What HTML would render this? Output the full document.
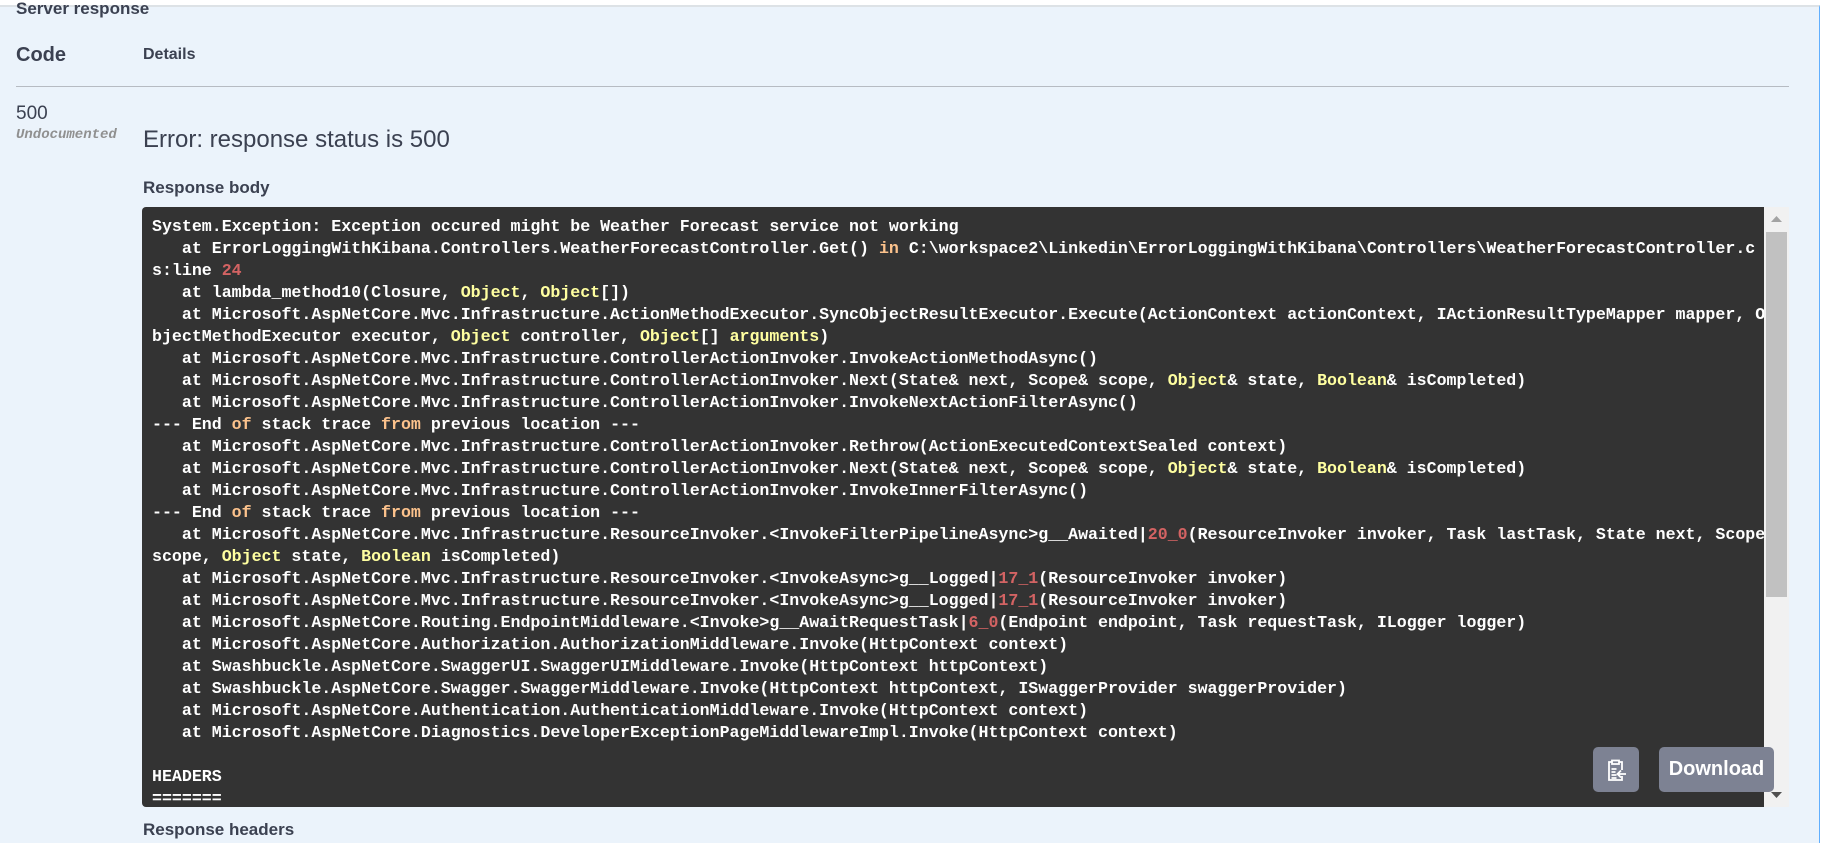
<!DOCTYPE html>
<html><head><meta charset="utf-8"><style>
html,body{margin:0;padding:0;width:1836px;height:841px;overflow:hidden;background:#fff;font-family:"Liberation Sans",Arial,sans-serif;color:#3b4151}
.bg{position:absolute;left:0;top:5px;width:1819px;height:836px;background:#ebf3fb;border-right:1px solid #61affe;border-top:2px solid #dde2e6}
.abs{position:absolute;white-space:nowrap}
.hr{position:absolute;left:16px;top:86px;width:1773px;height:1px;background:#b6bbc2}
.code{position:absolute;left:142px;top:207px;width:1622px;height:600px;background:#333;border-radius:4px 0 0 4px;overflow:hidden}
pre{margin:0;position:absolute;left:10px;top:9px;font-family:"Liberation Mono",monospace;font-weight:bold;font-size:16.6px;line-height:22px;color:#fff}
.y{color:#ffffa0}.o{color:#fcc28c}.r{color:#d36363}
.sb{position:absolute;left:1764px;top:207px;width:25px;height:600px;background:#f1f1f1}
.th{position:absolute;left:1766px;top:232px;width:21px;height:365px;background:#c1c1c1}
.btn{position:absolute;top:747px;height:45px;background:#7d8293;border-radius:5px;color:#fff;font-weight:bold;font-size:20px;line-height:45px;text-align:center}
</style></head><body>
<div class="bg"></div>
<div class="abs" style="left:16px;top:-1px;font-size:17px;font-weight:bold">Server response</div>
<div class="abs" style="left:16px;top:44px;font-size:20px;font-weight:bold">Code</div>
<div class="abs" style="left:143px;top:46px;font-size:16px;font-weight:bold">Details</div>
<div class="hr"></div>
<div class="abs" style="left:16px;top:103px;font-size:19px">500</div>
<div class="abs" style="left:16px;top:127px;font-size:14px;font-style:italic;font-weight:bold;font-family:'Liberation Mono',monospace;color:#909090">Undocumented</div>
<div class="abs" style="left:143px;top:126px;font-size:24px">Error: response status is 500</div>
<div class="abs" style="left:143px;top:178px;font-size:17px;font-weight:bold">Response body</div>
<div class="code"><pre>System.Exception: Exception occured might be Weather Forecast service not working
   at ErrorLoggingWithKibana.Controllers.WeatherForecastController.Get() <span class="o">in</span> C:\workspace2\Linkedin\ErrorLoggingWithKibana\Controllers\WeatherForecastController.c
s:line <span class="r">24</span>
   at lambda_method10(Closure, <span class="y">Object</span>, <span class="y">Object</span>[])
   at Microsoft.AspNetCore.Mvc.Infrastructure.ActionMethodExecutor.SyncObjectResultExecutor.Execute(ActionContext actionContext, IActionResultTypeMapper mapper, O
bjectMethodExecutor executor, <span class="y">Object</span> controller, <span class="y">Object</span>[] <span class="y">arguments</span>)
   at Microsoft.AspNetCore.Mvc.Infrastructure.ControllerActionInvoker.InvokeActionMethodAsync()
   at Microsoft.AspNetCore.Mvc.Infrastructure.ControllerActionInvoker.Next(State&amp; next, Scope&amp; scope, <span class="y">Object</span>&amp; state, <span class="y">Boolean</span>&amp; isCompleted)
   at Microsoft.AspNetCore.Mvc.Infrastructure.ControllerActionInvoker.InvokeNextActionFilterAsync()
--- End <span class="o">of</span> stack trace <span class="o">from</span> previous location ---
   at Microsoft.AspNetCore.Mvc.Infrastructure.ControllerActionInvoker.Rethrow(ActionExecutedContextSealed context)
   at Microsoft.AspNetCore.Mvc.Infrastructure.ControllerActionInvoker.Next(State&amp; next, Scope&amp; scope, <span class="y">Object</span>&amp; state, <span class="y">Boolean</span>&amp; isCompleted)
   at Microsoft.AspNetCore.Mvc.Infrastructure.ControllerActionInvoker.InvokeInnerFilterAsync()
--- End <span class="o">of</span> stack trace <span class="o">from</span> previous location ---
   at Microsoft.AspNetCore.Mvc.Infrastructure.ResourceInvoker.&lt;InvokeFilterPipelineAsync&gt;g__Awaited|<span class="r">20_0</span>(ResourceInvoker invoker, Task lastTask, State next, Scope
scope, <span class="y">Object</span> state, <span class="y">Boolean</span> isCompleted)
   at Microsoft.AspNetCore.Mvc.Infrastructure.ResourceInvoker.&lt;InvokeAsync&gt;g__Logged|<span class="r">17_1</span>(ResourceInvoker invoker)
   at Microsoft.AspNetCore.Mvc.Infrastructure.ResourceInvoker.&lt;InvokeAsync&gt;g__Logged|<span class="r">17_1</span>(ResourceInvoker invoker)
   at Microsoft.AspNetCore.Routing.EndpointMiddleware.&lt;Invoke&gt;g__AwaitRequestTask|<span class="r">6_0</span>(Endpoint endpoint, Task requestTask, ILogger logger)
   at Microsoft.AspNetCore.Authorization.AuthorizationMiddleware.Invoke(HttpContext context)
   at Swashbuckle.AspNetCore.SwaggerUI.SwaggerUIMiddleware.Invoke(HttpContext httpContext)
   at Swashbuckle.AspNetCore.Swagger.SwaggerMiddleware.Invoke(HttpContext httpContext, ISwaggerProvider swaggerProvider)
   at Microsoft.AspNetCore.Authentication.AuthenticationMiddleware.Invoke(HttpContext context)
   at Microsoft.AspNetCore.Diagnostics.DeveloperExceptionPageMiddlewareImpl.Invoke(HttpContext context)

HEADERS
=======</pre></div>
<div class="sb"></div><div class="th"></div>
<svg class="abs" style="left:1769px;top:214px" width="15" height="10"><path d="M2 8 L7.5 2 L13 8Z" fill="#a3a3a3"/></svg>
<svg class="abs" style="left:1769px;top:790px" width="15" height="10"><path d="M2 2 L7.5 8 L13 2Z" fill="#505050"/></svg>
<div class="btn" style="left:1593px;width:46px">
<svg width="22" height="24" viewBox="0 0 22 24" style="margin-top:11px"><g fill="none" stroke="#fff" stroke-width="1.8"><path d="M7 4H4v18h13v-4M17 12V4h-3"/><rect x="7" y="2.5" width="7" height="3.5"/><path d="M6.5 11h5M6.5 14h4M6.5 17h5M6.5 20h5"/><path d="M21 16h-8M16 12.5l-3.5 3.5 3.5 3.5"/></g></svg>
</div>
<div class="btn" style="left:1659px;width:115px">Download</div>
<div class="abs" style="left:143px;top:820px;font-size:17px;font-weight:bold">Response headers</div>
</body></html>
